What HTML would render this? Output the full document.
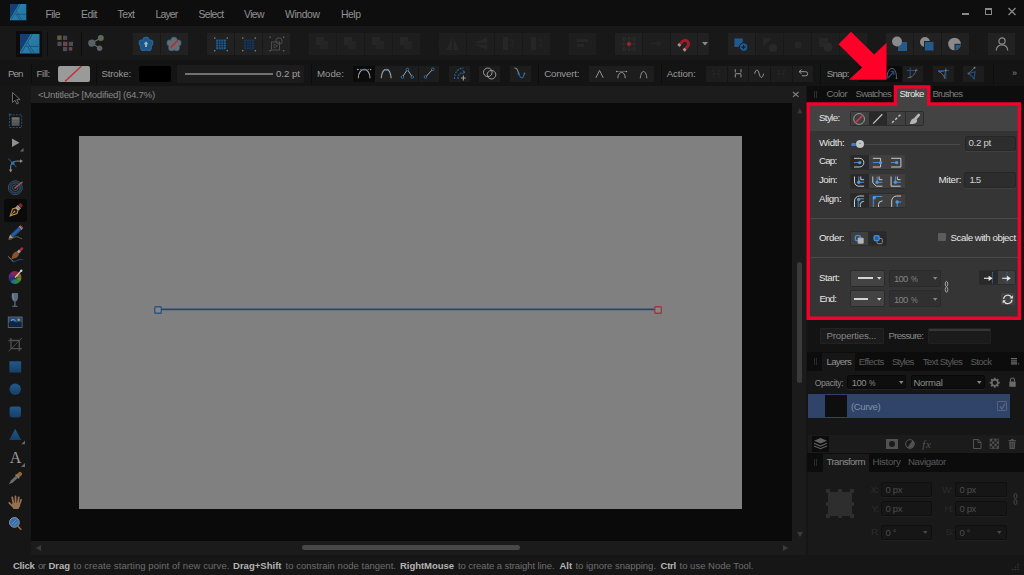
<!DOCTYPE html>
<html><head><meta charset="utf-8"><title>Affinity Designer - Stroke panel</title>
<style>
html,body{margin:0;padding:0;background:#161616;}
body{width:1024px;height:575px;position:relative;overflow:hidden;font-family:"Liberation Sans",sans-serif;}
body div,body svg,body span.t{position:absolute;display:block;}
span.t{white-space:pre;line-height:1;}
svg{overflow:visible}
</style></head><body>
<div style="left:0px;top:0px;width:1024px;height:26px;background:#0e0e0e;"></div>
<svg style="left:9.5px;top:4px;" width="16.3" height="16.3" viewBox="0 0 16 16"><defs><linearGradient id="lg1" x1="0" y1="0" x2="1" y2="1"><stop offset="0" stop-color="#2c87ae"/><stop offset="1" stop-color="#2273a0"/></linearGradient></defs><rect width="16" height="16" fill="url(#lg1)"/><path d="M0 0H8.800L0 14.800z" fill="#133f76"/><path d="M10.200 0L1.300 15.200M6.300 7l5.200 8.600M4.300 10.200H16M6.300 10.200l3.300 5.500" stroke="#1a5580" stroke-width=".8" fill="none"/></svg>
<span class="t" style="left:45.5px;top:10px;font-size:10.4px;letter-spacing:-0.565px;color:#929292;">File</span>
<span class="t" style="left:81px;top:10px;font-size:10.4px;letter-spacing:-0.480px;color:#929292;">Edit</span>
<span class="t" style="left:117.5px;top:10px;font-size:10.4px;letter-spacing:-0.518px;color:#929292;">Text</span>
<span class="t" style="left:155.5px;top:10px;font-size:10.4px;letter-spacing:-0.803px;color:#929292;">Layer</span>
<span class="t" style="left:198.5px;top:10px;font-size:10.4px;letter-spacing:-0.651px;color:#929292;">Select</span>
<span class="t" style="left:244px;top:10px;font-size:10.4px;letter-spacing:-0.589px;color:#929292;">View</span>
<span class="t" style="left:285px;top:10px;font-size:10.4px;letter-spacing:-0.415px;color:#929292;">Window</span>
<span class="t" style="left:341px;top:10px;font-size:10.4px;letter-spacing:-0.472px;color:#929292;">Help</span>
<div style="left:961.5px;top:12.5px;width:7.5px;height:2.5px;background:#8a8a8a;"></div>
<div style="left:984.5px;top:8px;width:7.5px;height:7px;background:transparent;border:1px solid #8a8a8a;border-top:2.5px solid #8a8a8a;box-sizing:border-box;"></div>
<svg style="left:1008px;top:8px;" width="8" height="7" viewBox="0 0 8 7"><path d="M0.5 0L7.5 7M7.5 0L0.5 7" stroke="#8a8a8a" stroke-width="1.3"/></svg>
<div style="left:0px;top:26px;width:1024px;height:35px;background:#181818;"></div>
<div style="left:16px;top:31px;width:26px;height:25.5px;background:#0b0b0b;border-radius:2px;"></div>
<svg style="left:20px;top:34px;" width="19.5" height="19.5" viewBox="0 0 16 16"><defs><linearGradient id="lg2" x1="0" y1="0" x2="1" y2="1"><stop offset="0" stop-color="#2c87ae"/><stop offset="1" stop-color="#2273a0"/></linearGradient></defs><rect width="16" height="16" fill="url(#lg2)"/><path d="M0 0H8.800L0 14.800z" fill="#133f76"/><path d="M10.200 0L1.300 15.200M6.300 7l5.200 8.600M4.300 10.200H16M6.300 10.200l3.300 5.500" stroke="#1a5580" stroke-width=".8" fill="none"/></svg>
<div style="left:47px;top:32px;width:1px;height:24px;background:#0c0c0c;"></div>
<div style="left:81px;top:32px;width:1px;height:24px;background:#0c0c0c;"></div>
<svg style="left:56px;top:35px;" width="18" height="18" viewBox="56 35 18 18"><rect x="57.2" y="35.5" width="4.4" height="4.4" fill="#6a5a3c"/><rect x="63" y="35.7" width="4.2" height="4.2" fill="#4c4c58"/><rect x="57.4" y="41.8" width="4.2" height="4.2" fill="#4c4c58"/><rect x="63" y="41.7" width="4.4" height="4.4" fill="#6c4646"/><rect x="68.8" y="41.8" width="4.2" height="4.2" fill="#4c4c58"/><rect x="63" y="47" width="4.2" height="4.2" fill="#4c4c58"/><rect x="68.8" y="47.1" width="3.5" height="3.5" fill="#6c4646"/></svg>
<svg style="left:86px;top:33px;" width="18" height="20" viewBox="86 33 18 20"><path d="M91.800 43.100L100.800 38.100M91.800 43.100L99.600 48.300" stroke="#6a7072" stroke-width="1.100"/><circle cx="91.800" cy="43.100" r="3.700" fill="#566265"/><circle cx="100.800" cy="38.100" r="3" fill="#5e6a58"/><circle cx="99.600" cy="48.300" r="2.700" fill="#606068"/></svg>
<div style="left:133px;top:33px;width:27px;height:21.5px;background:#212121;"></div>
<div style="left:161px;top:33px;width:27px;height:21.5px;background:#212121;"></div>
<svg style="left:138.3px;top:36px;" width="16" height="16" viewBox="0 0 16 16"><circle cx="8.00" cy="4.10" r="3.400" fill="#2a6ea6"/><circle cx="11.99" cy="7.00" r="3.400" fill="#2a6ea6"/><circle cx="10.47" cy="11.70" r="3.400" fill="#2a6ea6"/><circle cx="5.53" cy="11.70" r="3.400" fill="#2a6ea6"/><circle cx="4.01" cy="7.00" r="3.400" fill="#2a6ea6"/><circle cx="8.00" cy="4.10" r="2.700" fill="#1d5788"/><circle cx="11.99" cy="7.00" r="2.700" fill="#1d5788"/><circle cx="10.47" cy="11.70" r="2.700" fill="#1d5788"/><circle cx="5.53" cy="11.70" r="2.700" fill="#1d5788"/><circle cx="4.01" cy="7.00" r="2.700" fill="#1d5788"/><circle cx="8" cy="8.300" r="4.300" fill="#1d5788"/><path d="M8 5.200l2.300 3H8.900v2.800H7.100V8.200H5.700z" fill="#a8b4bc"/></svg>
<svg style="left:166.3px;top:36px;" width="16" height="16" viewBox="0 0 16 16"><circle cx="8.00" cy="4.10" r="3.400" fill="#235f92"/><circle cx="11.99" cy="7.00" r="3.400" fill="#235f92"/><circle cx="10.47" cy="11.70" r="3.400" fill="#235f92"/><circle cx="5.53" cy="11.70" r="3.400" fill="#235f92"/><circle cx="4.01" cy="7.00" r="3.400" fill="#235f92"/><circle cx="8.00" cy="4.10" r="2.700" fill="#6c6c6c"/><circle cx="11.99" cy="7.00" r="2.700" fill="#6c6c6c"/><circle cx="10.47" cy="11.70" r="2.700" fill="#6c6c6c"/><circle cx="5.53" cy="11.70" r="2.700" fill="#6c6c6c"/><circle cx="4.01" cy="7.00" r="2.700" fill="#6c6c6c"/><circle cx="8" cy="8.300" r="4.300" fill="#6c6c6c"/><path d="M4.300 12L11.700 4.600" stroke="#b02a34" stroke-width="1.400"/></svg>
<div style="left:207px;top:33px;width:27px;height:21.5px;background:#212121;"></div>
<div style="left:235px;top:33px;width:27px;height:21.5px;background:#212121;"></div>
<div style="left:263px;top:33px;width:27px;height:21.5px;background:#212121;"></div>
<svg style="left:212.5px;top:35.5px;" width="16" height="16" viewBox="0 0 16 16"><rect x="3.200" y="3.600" width="9.600" height="9.600" fill="#20639a" opacity="1"/><path d="M5.6 3.600v9.600M3.200 6.0h9.600" stroke="#16202a" stroke-width=".7"/><path d="M8.0 3.600v9.600M3.200 8.4h9.600" stroke="#16202a" stroke-width=".7"/><path d="M10.4 3.600v9.600M3.200 10.8h9.600" stroke="#16202a" stroke-width=".7"/><rect x="1.0" y="1.4000000000000001" width="1.400" height="1.400" fill="#7c7c7c"/><rect x="13.600000000000001" y="1.4000000000000001" width="1.400" height="1.400" fill="#7c7c7c"/><rect x="1.0" y="14.0" width="1.400" height="1.400" fill="#7c7c7c"/><rect x="13.600000000000001" y="14.0" width="1.400" height="1.400" fill="#7c7c7c"/></svg>
<svg style="left:240.5px;top:35.5px;" width="16" height="16" viewBox="0 0 16 16"><rect x="3.200" y="3.600" width="9.600" height="9.600" fill="#173c5e" opacity="1"/><path d="M5.6 3.600v9.600M3.200 6.0h9.600" stroke="#16202a" stroke-width=".7"/><path d="M8.0 3.600v9.600M3.200 8.4h9.600" stroke="#16202a" stroke-width=".7"/><path d="M10.4 3.600v9.600M3.200 10.8h9.600" stroke="#16202a" stroke-width=".7"/><rect x="1.0" y="1.4000000000000001" width="1.400" height="1.400" fill="#7c7c7c"/><rect x="13.600000000000001" y="1.4000000000000001" width="1.400" height="1.400" fill="#7c7c7c"/><rect x="1.0" y="14.0" width="1.400" height="1.400" fill="#7c7c7c"/><rect x="13.600000000000001" y="14.0" width="1.400" height="1.400" fill="#7c7c7c"/></svg>
<svg style="left:268.5px;top:35.5px;" width="16" height="16" viewBox="0 0 16 16"><rect x="2.500" y="6" width="8" height="8" fill="none" stroke="#4c4c4c"/><circle cx="10" cy="5" r="3.200" fill="none" stroke="#4c4c4c"/><path d="M5 8l3.500 2L5 12z" fill="none" stroke="#4c4c4c" stroke-width=".8"/><rect x=".5" y=".5" width="1.3" height="1.3" fill="#6a6a6a"/><rect x="14" y=".5" width="1.3" height="1.3" fill="#6a6a6a"/><rect x=".5" y="14" width="1.3" height="1.3" fill="#6a6a6a"/><rect x="14" y="14" width="1.3" height="1.3" fill="#6a6a6a"/></svg>
<div style="left:309px;top:33px;width:27px;height:21.5px;background:#1e1e1e;"></div>
<svg style="left:315px;top:36px;" width="15" height="15" viewBox="0 0 15 15"><rect x="1" y="1" width="8" height="8" fill="#262626"/><rect x="5" y="5" width="8" height="8" fill="#262626" opacity=".8"/></svg>
<div style="left:337px;top:33px;width:27px;height:21.5px;background:#1e1e1e;"></div>
<svg style="left:343px;top:36px;" width="15" height="15" viewBox="0 0 15 15"><rect x="1" y="1" width="8" height="8" fill="#262626"/><rect x="5" y="5" width="8" height="8" fill="#262626" opacity=".8"/></svg>
<div style="left:365px;top:33px;width:27px;height:21.5px;background:#1e1e1e;"></div>
<svg style="left:371px;top:36px;" width="15" height="15" viewBox="0 0 15 15"><rect x="1" y="1" width="8" height="8" fill="#262626"/><rect x="5" y="5" width="8" height="8" fill="#262626" opacity=".8"/></svg>
<div style="left:393px;top:33px;width:27px;height:21.5px;background:#1e1e1e;"></div>
<svg style="left:399px;top:36px;" width="15" height="15" viewBox="0 0 15 15"><rect x="1" y="1" width="8" height="8" fill="#262626"/><rect x="5" y="5" width="8" height="8" fill="#262626" opacity=".8"/></svg>
<div style="left:439px;top:33px;width:27px;height:21.5px;background:#1e1e1e;"></div>
<div style="left:467px;top:33px;width:27px;height:21.5px;background:#1e1e1e;"></div>
<div style="left:495px;top:33px;width:27px;height:21.5px;background:#1e1e1e;"></div>
<div style="left:523px;top:33px;width:27px;height:21.5px;background:#1e1e1e;"></div>
<svg style="left:445px;top:36px;" width="15" height="15" viewBox="0 0 15 15"><path d="M7 1v13H1zM8.500 1l5.500 13H8.500z" fill="#262626"/></svg>
<svg style="left:473px;top:36px;" width="15" height="15" viewBox="0 0 15 15"><path d="M1 7h13V1zM1 8.500l13 5.500V8.500z" fill="#262626"/></svg>
<svg style="left:501px;top:36px;" width="15" height="15" viewBox="0 0 15 15"><rect x="2" y="1" width="5" height="13" fill="#262626"/><path d="M9 4h3v6h-3" stroke="#262626" fill="none" stroke-width="1.200"/></svg>
<svg style="left:529px;top:36px;" width="15" height="15" viewBox="0 0 15 15"><rect x="2" y="1" width="5" height="13" fill="#262626"/><path d="M9 4h3v6h-3" stroke="#262626" fill="none" stroke-width="1.200"/></svg>
<div style="left:569px;top:33px;width:27px;height:21.5px;background:#1e1e1e;"></div>
<svg style="left:575px;top:36px;" width="15" height="15" viewBox="0 0 15 15"><rect x="2" y="3" width="11" height="3" fill="#262626"/><rect x="2" y="8" width="7" height="3" fill="#262626"/></svg>
<div style="left:615px;top:33px;width:27px;height:21.5px;background:#212121;"></div>
<div style="left:643px;top:33px;width:27px;height:21.5px;background:#1e1e1e;"></div>
<div style="left:671px;top:33px;width:26.3px;height:21.5px;background:#212121;"></div>
<div style="left:698.3px;top:33px;width:11.2px;height:21.5px;background:#212121;"></div>
<svg style="left:620.5px;top:35.5px;" width="16" height="16" viewBox="0 0 16 16"><path d="M3 1v14M1 3h14" stroke="#303030" stroke-width="1" stroke-dasharray="2 1"/><path d="M8 1v14M1 8h14" stroke="#303030" stroke-width="1" stroke-dasharray="2 1"/><path d="M13 1v14M1 13h14" stroke="#303030" stroke-width="1" stroke-dasharray="2 1"/><rect x="6.300" y="6.300" width="3.400" height="3.400" fill="#b0202a"/></svg>
<svg style="left:649px;top:36px;" width="15" height="15" viewBox="0 0 15 15"><path d="M2 7.500h9M8.500 5l3 2.500-3 2.500" stroke="#262626" stroke-width="1.300" fill="none"/></svg>
<svg style="left:676px;top:35px;" width="18" height="18" viewBox="0 0 18 18"><g transform="rotate(222 9 9) translate(1.5 1.5) scale(.84)"><path d="M3 3v6a6 6 0 0012 0V3h-3.500v6a2.500 2.500 0 01-5 0V3z" fill="#a01c28"/><rect x="3" y="2" width="3.500" height="3" fill="#9a9a9a"/><rect x="11.500" y="2" width="3.500" height="3" fill="#9a9a9a"/></g></svg>
<svg style="left:701.5px;top:42px;" width="6" height="4" viewBox="0 0 6 4"><path d="M0 0h6L3 3.500z" fill="#8a8a8a"/></svg>
<div style="left:728px;top:33px;width:27px;height:21.5px;background:#212121;"></div>
<div style="left:756px;top:33px;width:27px;height:21.5px;background:#1e1e1e;"></div>
<div style="left:784px;top:33px;width:27px;height:21.5px;background:#1e1e1e;"></div>
<div style="left:812px;top:33px;width:27px;height:21.5px;background:#1e1e1e;"></div>
<div style="left:840px;top:33px;width:27px;height:21.5px;background:#1e1e1e;"></div>
<svg style="left:734.3px;top:37.5px;" width="16" height="16" viewBox="0 0 16 16"><rect x="0.400" y="0.500" width="8.400" height="8.400" fill="#1f5a8e"/><circle cx="9.700" cy="9.100" r="4.300" fill="#1f5a8e" stroke="#1b1b1b" stroke-width="1"/><path d="M7.300 9.100h4.400M9.500 6.900v4.400" stroke="#10202e" stroke-width="1.100"/></svg>
<svg style="left:762px;top:36.5px;" width="16" height="16" viewBox="0 0 16 16"><path d="M1 1h9L1 10z" fill="#262626"/><circle cx="11" cy="11" r="4" fill="#292929"/></svg>
<svg style="left:790px;top:36.5px;" width="16" height="16" viewBox="0 0 16 16"><circle cx="8" cy="8" r="3.500" fill="#262626"/></svg>
<svg style="left:818px;top:36.5px;" width="16" height="16" viewBox="0 0 16 16"><path d="M1 1h9v9H1z" fill="#262626"/><circle cx="10" cy="10" r="4.500" fill="#292929"/></svg>
<div style="left:886px;top:33px;width:27px;height:21.5px;background:#212121;"></div>
<div style="left:914px;top:33px;width:27px;height:21.5px;background:#212121;"></div>
<div style="left:942px;top:33px;width:27px;height:21.5px;background:#212121;"></div>
<svg style="left:891px;top:36px;" width="17" height="17" viewBox="0 0 17 17"><rect x="7" y="6" width="9" height="9" fill="#235a8c"/><circle cx="6" cy="5.500" r="5" fill="#8a8a8a"/></svg>
<svg style="left:919px;top:36px;" width="17" height="17" viewBox="0 0 17 17"><circle cx="6" cy="6" r="5" fill="#8a8a8a"/><rect x="5.500" y="5.500" width="9.500" height="9.500" fill="#235a8c" stroke="#232323" stroke-width="1"/></svg>
<svg style="left:947px;top:36px;" width="17" height="17" viewBox="0 0 17 17"><defs><clipPath id="cpi"><circle cx="7.500" cy="8" r="6.300"/></clipPath></defs><circle cx="7.500" cy="8" r="6.300" fill="#8a8a8a"/><rect x="8" y="8.300" width="7" height="7" fill="#235a8c" stroke="#212121" stroke-width="1" clip-path="url(#cpi)"/></svg>
<div style="left:988px;top:33px;width:27px;height:21.5px;background:#212121;"></div>
<svg style="left:994.5px;top:36.5px;" width="14" height="14" viewBox="0 0 14 14"><circle cx="7" cy="4" r="3.100" fill="none" stroke="#8c8c8c" stroke-width="1.200"/><path d="M1.200 13.500c.5-4 2.800-5.600 5.800-5.600s5.300 1.600 5.800 5.600" fill="none" stroke="#8c8c8c" stroke-width="1.200"/></svg>
<div style="left:0px;top:60px;width:1024px;height:26px;background:#141414;"></div>
<span class="t" style="left:8px;top:69px;font-size:9.7px;letter-spacing:-0.920px;color:#9a9a9a;">Pen</span>
<div style="left:31px;top:64px;width:1px;height:20px;background:#0c0c0c;"></div>
<span class="t" style="left:36.5px;top:69px;font-size:9.7px;letter-spacing:-0.317px;color:#9a9a9a;">Fill:</span>
<div style="left:58px;top:66px;width:31.5px;height:15.5px;background:#9a9a9a;border-radius:2px;overflow:hidden;"><svg width="31.500" height="15.500" style="left:0;top:0"><path d="M7 15.500L23.500 0" stroke="#c42c3a" stroke-width="1.400"/></svg></div>
<div style="left:96px;top:64px;width:1px;height:20px;background:#0c0c0c;"></div>
<span class="t" style="left:101.5px;top:69px;font-size:9.7px;letter-spacing:-0.176px;color:#9a9a9a;">Stroke:</span>
<div style="left:139px;top:66px;width:31.5px;height:15.5px;background:#000;border-radius:2px;"></div>
<div style="left:177px;top:65px;width:126.5px;height:18px;background:#1c1c1c;border-radius:2px;"></div>
<div style="left:184.5px;top:73.3px;width:88.5px;height:1.5px;background:#727272;"></div>
<span class="t" style="left:276px;top:69px;font-size:9.7px;letter-spacing:-0.045px;color:#a0a0a0;">0.2 pt</span>
<div style="left:311px;top:64px;width:1px;height:20px;background:#0c0c0c;"></div>
<span class="t" style="left:317px;top:69px;font-size:9.7px;letter-spacing:0.008px;color:#9a9a9a;">Mode:</span>
<div style="left:353.3px;top:66px;width:21.5px;height:15.5px;background:#0b0b0b;"></div>
<div style="left:375.3px;top:66px;width:21.3px;height:15.5px;background:#1d1d1d;"></div>
<div style="left:397px;top:66px;width:21.3px;height:15.5px;background:#1d1d1d;"></div>
<div style="left:418.7px;top:66px;width:20.5px;height:15.5px;background:#1d1d1d;"></div>
<svg style="left:353px;top:65px;" width="88" height="17" viewBox="353 65 88 17"><path d="M358.300 78.200C358.300 66.500 370 66.500 370 78.200" fill="none" stroke="#a2a2a2" stroke-width="1.100"/><path d="M357.500 69.500h13.500" stroke="#8a8a8a" stroke-width=".7" stroke-dasharray="1.500 1"/><circle cx="364.150" cy="69.700" r="1.100" fill="#3577b4"/><circle cx="357.800" cy="69.500" r=".8" fill="#a2a2a2"/><circle cx="370.600" cy="69.500" r=".8" fill="#a2a2a2"/><path d="M381.200 78.200C382.500 66.400 390 66.400 391.200 78.200" fill="none" stroke="#a2a2a2" stroke-width="1.100"/><circle cx="386.200" cy="70" r="1.100" fill="#3577b4"/><path d="M402.500 77L407.400 69.500L412.300 77" fill="none" stroke="#a2a2a2" stroke-width="1"/><circle cx="402.5" cy="77" r="1.300" fill="#141414" stroke="#3577b4" stroke-width=".9"/><circle cx="407.4" cy="69.5" r="1.300" fill="#141414" stroke="#3577b4" stroke-width=".9"/><circle cx="412.3" cy="77" r="1.300" fill="#141414" stroke="#3577b4" stroke-width=".9"/><path d="M425.500 77L432.800 69.300" fill="none" stroke="#a2a2a2" stroke-width="1"/><circle cx="425.5" cy="77" r="1.300" fill="#141414" stroke="#3577b4" stroke-width=".9"/><circle cx="432.8" cy="69.3" r="1.300" fill="#141414" stroke="#3577b4" stroke-width=".9"/></svg>
<div style="left:449px;top:66px;width:21px;height:15.5px;background:#1d1d1d;"></div>
<div style="left:479px;top:66px;width:21px;height:15.5px;background:#1d1d1d;"></div>
<div style="left:509.5px;top:66px;width:21px;height:15.5px;background:#1d1d1d;"></div>
<svg style="left:449px;top:65px;" width="83" height="17" viewBox="449 65 83 17"><path d="M454.500 79C454.500 72.500 457.500 68.500 463.500 68" fill="none" stroke="#2a6aa6" stroke-width="1.100" stroke-dasharray="1.800 1.200"/><path d="M458 79c0-4 1.800-6.300 5.500-6.800" fill="none" stroke="#2a6aa6" stroke-width="1.100" stroke-dasharray="1.800 1.200"/><path d="M462.500 70.500l2.500 1.700-2.700 1.600" fill="none" stroke="#2a6aa6" stroke-width="1"/><path d="M461 78h4.800M463.400 75.600v4.800" stroke="#9a9a9a" stroke-width="1.100"/><circle cx="487.800" cy="72.300" r="4.300" fill="none" stroke="#9c9c9c" stroke-width="1"/><circle cx="491.500" cy="74.700" r="4.300" fill="none" stroke="#9c9c9c" stroke-width="1"/><path d="M514.500 68c3.500 0 3.500 3.500 4.200 5.700" fill="none" stroke="#8a8a8a" stroke-width="1.100"/><path d="M518.700 73.700c1 4 3.500 5.500 4.800 2.500l.8-2.200" fill="none" stroke="#2a6aa6" stroke-width="1.100"/><circle cx="518.700" cy="73.700" r="1.200" fill="#2a6aa6"/><circle cx="524.500" cy="73.500" r=".9" fill="#666"/></svg>
<div style="left:538px;top:64px;width:1px;height:20px;background:#0c0c0c;"></div>
<span class="t" style="left:544.2px;top:69px;font-size:9.7px;letter-spacing:-0.207px;color:#9a9a9a;">Convert:</span>
<div style="left:589px;top:66px;width:21.5px;height:15.5px;background:#1d1d1d;"></div>
<div style="left:611px;top:66px;width:21.5px;height:15.5px;background:#1d1d1d;"></div>
<div style="left:633px;top:66px;width:21px;height:15.5px;background:#1d1d1d;"></div>
<svg style="left:593.44px;top:68.26px;" width="13.12" height="11.48" viewBox="0 0 16 14"><path d="M3.500 12L8 3l4.500 9" fill="none" stroke="#a2a2a2" stroke-width="1.100"/></svg>
<svg style="left:615.44px;top:68.26px;" width="13.12" height="11.48" viewBox="0 0 16 14"><path d="M3.500 12.500C3.500 3 12.500 3 12.500 12.500" fill="none" stroke="#a2a2a2" stroke-width="1.100"/><path d="M2 4.200h12" stroke="#777" stroke-width=".8"/><circle cx="2" cy="4.200" r=".9" fill="#a2a2a2"/><circle cx="14" cy="4.200" r=".9" fill="#a2a2a2"/></svg>
<svg style="left:637.44px;top:68.26px;" width="13.12" height="11.48" viewBox="0 0 16 14"><path d="M4 12.500C5 1.500 11 1.500 12 12.500" fill="none" stroke="#a2a2a2" stroke-width="1.100"/></svg>
<div style="left:661px;top:64px;width:1px;height:20px;background:#0c0c0c;"></div>
<span class="t" style="left:666.7px;top:69px;font-size:9.7px;letter-spacing:-0.094px;color:#9a9a9a;">Action:</span>
<div style="left:706px;top:66px;width:20.5px;height:15.5px;background:#1d1d1d;"></div>
<div style="left:727.5px;top:66px;width:20.5px;height:15.5px;background:#1d1d1d;"></div>
<div style="left:749px;top:66px;width:21px;height:15.5px;background:#1d1d1d;"></div>
<div style="left:771px;top:66px;width:20.5px;height:15.5px;background:#1d1d1d;"></div>
<div style="left:792.5px;top:66px;width:20.5px;height:15.5px;background:#1d1d1d;"></div>
<svg style="left:710.35px;top:68.26px;" width="12.3" height="11.48" viewBox="0 0 15 14"><path d="M4 2v10M11 2v10M4 7h7" stroke="#2a2a2a" stroke-width="1.100" stroke-dasharray="3 1.500"/></svg>
<svg style="left:731.85px;top:68.26px;" width="12.3" height="11.48" viewBox="0 0 15 14"><path d="M4 1.500v11M11 1.500v11" stroke="#a2a2a2" stroke-width="1.100" stroke-dasharray="4 2"/><path d="M4 7h7" stroke="#a2a2a2" stroke-width="1.100"/></svg>
<svg style="left:753.35px;top:68.26px;" width="12.3" height="11.48" viewBox="0 0 15 14"><path d="M2 7c1.500-6 4-6 5.500 0s4 6 5.500 0" fill="none" stroke="#a2a2a2" stroke-width="1.100"/></svg>
<svg style="left:775.35px;top:68.26px;" width="12.3" height="11.48" viewBox="0 0 15 14"><path d="M4 2v10M11 2v10M4 7h7" stroke="#2a2a2a" stroke-width="1.100" stroke-dasharray="3 1.500"/></svg>
<svg style="left:796.85px;top:68.26px;" width="12.3" height="11.48" viewBox="0 0 15 14"><path d="M3 4.500h7.500a2.500 2.500 0 010 5H6" fill="none" stroke="#a2a2a2" stroke-width="1.100"/><path d="M5.500 2L2.500 4.500l3 2.500" fill="none" stroke="#a2a2a2" stroke-width="1.100"/></svg>
<div style="left:820px;top:64px;width:1px;height:20px;background:#0c0c0c;"></div>
<span class="t" style="left:826.7px;top:69px;font-size:9.7px;letter-spacing:-0.670px;color:#9a9a9a;">Snap:</span>
<div style="left:859px;top:66px;width:43px;height:15.5px;background:#0b0b0b;"></div>
<div style="left:902.5px;top:66px;width:20.5px;height:15.5px;background:#1d1d1d;"></div>
<div style="left:933px;top:66px;width:20.5px;height:15.5px;background:#1d1d1d;"></div>
<div style="left:963px;top:66px;width:21px;height:15.5px;background:#1d1d1d;"></div>
<svg style="left:884px;top:65px;" width="102" height="16" viewBox="884 65 102 16"><path d="M887 78.500c0-6 2-10 5-10s4.500 4 4.500 10" fill="none" stroke="#646464" stroke-width="1"/><path d="M888 78l5.500-6" stroke="#1f4f80" stroke-width="1.200"/><path d="M890.500 71.500h3.300v3.500" fill="none" stroke="#1f4f80" stroke-width="1.100"/><circle cx="896.500" cy="78.300" r=".9" fill="#555"/><path d="M910.200 67.700v10.600M906.700 70.500h11.300" stroke="#1f4f80" stroke-width="1.100"/><path d="M907.500 77.800c5 0 8-4 8.800-9" fill="none" stroke="#646464" stroke-width="1"/><circle cx="910.200" cy="77.300" r=".9" fill="#666"/><circle cx="915.800" cy="70.500" r=".9" fill="#666"/><path d="M938.500 71.500c3 .2 5 0 7.500-1.500-1 3-1.500 5.500-1.300 8.500-.8-3.200-3-5.800-6.200-7z" fill="none" stroke="#646464" stroke-width="1"/><path d="M945.800 68v11M938 70.500h11" stroke="#1f4f80" stroke-width="1.100"/><circle cx="945.800" cy="70.500" r=".9" fill="#777"/><path d="M968.800 73.500l6.400-1.800-1.200 6.800z" fill="none" stroke="#1f4f80" stroke-width="1.100"/><path d="M968.800 73.500l5.700-5.800" stroke="#646464" stroke-width="1"/><circle cx="968.500" cy="73.500" r=".9" fill="#666"/><circle cx="974.600" cy="67.800" r="1" fill="#777"/><circle cx="974" cy="78.500" r=".9" fill="#1f4f80"/></svg>
<div style="left:992.5px;top:64px;width:1px;height:20px;background:#0c0c0c;"></div>
<span class="t" style="left:1012px;top:69px;font-size:9px;letter-spacing:-0.506px;color:#8a8a8a;">»</span>
<div style="left:31px;top:86px;width:775px;height:17.2px;background:#1c1c1c;"></div>
<span class="t" style="left:38px;top:90px;font-size:9.7px;letter-spacing:-0.298px;color:#868686;">&lt;Untitled&gt; [Modified] (64.7%)</span>
<svg style="left:793px;top:92px;" width="5.6" height="4.9" viewBox="0 0 5.6 4.9"><path d="M0 0L5.600 4.900M5.600 0L0 4.900" stroke="#848484" stroke-width="1.100"/></svg>
<div style="left:31px;top:103.2px;width:761px;height:437.8px;background:#0a0a0a;"></div>
<div style="left:78.5px;top:135.5px;width:663.5px;height:373.5px;background:#808080;"></div>
<svg style="left:150px;top:300px;" width="520" height="20" viewBox="150 300 520 20"><path d="M161.500 309.450H654.500" stroke="#28466c" stroke-width="1.700"/><rect x="154.800" y="306.700" width="6.500" height="6.500" rx=".8" fill="#878787" stroke="#2c538a" stroke-width="1.400"/><rect x="654.800" y="306.700" width="6.500" height="6.500" rx=".8" fill="#878787" stroke="#a4363e" stroke-width="1.400"/></svg>
<div style="left:792px;top:103.2px;width:14.3px;height:451.8px;background:#1b1b1b;"></div>
<div style="left:31px;top:540.8px;width:761px;height:14.2px;background:#1b1b1b;"></div>
<div style="left:797px;top:261.5px;width:5px;height:121px;background:#3a3a3a;border-radius:2.500px;"></div>
<div style="left:302px;top:545px;width:217.5px;height:5px;background:#484848;border-radius:2.500px;"></div>
<svg style="left:796.7px;top:108.2px;" width="5.6" height="5.4" viewBox="0 0 5.6 5.4"><path d="M2.800 0L5.600 5.400H0z" fill="#363636"/></svg>
<svg style="left:796.5px;top:531.5px;" width="6" height="5" viewBox="0 0 6 5"><path d="M0 0h6L3 5z" fill="#3c3c3c"/></svg>
<svg style="left:35.5px;top:544.5px;" width="5" height="6" viewBox="0 0 5 6"><path d="M5 0v6L0 3z" fill="#3c3c3c"/></svg>
<svg style="left:782.5px;top:544.5px;" width="5" height="6" viewBox="0 0 5 6"><path d="M0 0v6l5-3z" fill="#3c3c3c"/></svg>
<div style="left:0px;top:555px;width:1024px;height:20px;background:#161616;"></div>
<span class="t" style="left:13px;top:561px;font-size:9.5px;letter-spacing:-0.241px;color:#b4b4b4;font-weight:bold;">Click</span>
<span class="t" style="left:38px;top:561px;font-size:9.5px;letter-spacing:-0.474px;color:#6e6e6e;">or</span>
<span class="t" style="left:48.5px;top:561px;font-size:9.5px;letter-spacing:-0.036px;color:#b4b4b4;font-weight:bold;">Drag</span>
<span class="t" style="left:73.5px;top:561px;font-size:9.5px;letter-spacing:0.075px;color:#6e6e6e;">to create starting point of new curve.</span>
<span class="t" style="left:233px;top:561px;font-size:9.5px;letter-spacing:0.020px;color:#b4b4b4;font-weight:bold;">Drag+Shift</span>
<span class="t" style="left:285.5px;top:561px;font-size:9.5px;letter-spacing:0.025px;color:#6e6e6e;">to constrain node tangent.</span>
<span class="t" style="left:400px;top:561px;font-size:9.5px;letter-spacing:-0.036px;color:#b4b4b4;font-weight:bold;">RightMouse</span>
<span class="t" style="left:458px;top:561px;font-size:9.5px;letter-spacing:-0.087px;color:#6e6e6e;">to create a straight line.</span>
<span class="t" style="left:559.5px;top:561px;font-size:9.5px;letter-spacing:-0.055px;color:#b4b4b4;font-weight:bold;">Alt</span>
<span class="t" style="left:575.5px;top:561px;font-size:9.5px;letter-spacing:-0.016px;color:#6e6e6e;">to ignore snapping.</span>
<span class="t" style="left:660.5px;top:561px;font-size:9.5px;letter-spacing:-0.215px;color:#b4b4b4;font-weight:bold;">Ctrl</span>
<span class="t" style="left:679.5px;top:561px;font-size:9.5px;letter-spacing:0.014px;color:#6e6e6e;">to use Node Tool.</span>
<svg style="left:1012px;top:563px;" width="8" height="8" viewBox="0 0 8 8"><path d="M6 1v1M6 3.500v1M3.500 3.500v1M6 6v1M3.500 6v1M1 6v1" stroke="#3a3a3a" stroke-width="1.500"/></svg>
<div style="left:0px;top:86px;width:31px;height:469px;background:#161616;"></div>
<svg style="left:7.5px;top:89.6px;" width="16" height="16" viewBox="0 0 16 16"><path d="M4.500 2.500v10l2.600-2.300 1.700 3.800 1.700-.8-1.700-3.600h3.400z" fill="#0e0e0e" stroke="#6a6a6a" stroke-width="1"/></svg>
<svg style="left:7.5px;top:113.0px;" width="16" height="16" viewBox="0 0 16 16"><defs><linearGradient id="abg" x1="0" y1="0" x2="0" y2="1"><stop offset="0" stop-color="#787878"/><stop offset="1" stop-color="#505050"/></linearGradient></defs><rect x="1.500" y="1.800" width="12.200" height="12.700" fill="none" stroke="#1a5484" stroke-width="1" stroke-dasharray="2 1.200"/><rect x="3.700" y="4.300" width="7.800" height="8.500" fill="url(#abg)"/><path d="M3.700 7.200h7.800M3.700 10h7.800" stroke="#404040" stroke-width=".6"/><path d="M2 0v2.500M0.500 1.500h3" stroke="#1a5484" stroke-width=".8"/></svg>
<svg style="left:6.5px;top:134.5px;" width="18" height="18" viewBox="0 0 18 18"><path d="M5 3.500l7.500 4.300-7.500 4.300z" fill="#909090"/><path d="M16.500 13v3.500h-3.500z" fill="#6a6a6a"/></svg>
<svg style="left:0px;top:152px;" width="32" height="70" viewBox="0 152 32 70"><path d="M10.700 170.500v-3.500c0-3.500 2.500-5.900 6-5.900h4" fill="none" stroke="#8a8a8a" stroke-width="1"/><path d="M20 159.300l3 1.800-3 1.800zM8.900 169.500l1.800 3 1.800-3z" fill="#8a8a8a"/><path d="M8.500 158.700L16.400 167.200" stroke="#1a4f80" stroke-width="1.100"/><rect x="11.400" y="161.700" width="3" height="3" fill="#2b78b8"/></svg>
<svg style="left:0px;top:152px;" width="32" height="70" viewBox="0 152 32 70"><circle cx="15.300" cy="187.700" r="6.900" fill="none" stroke="#5c5c5c" stroke-width=".8"/><circle cx="15.300" cy="187.700" r="5" fill="none" stroke="#19446e" stroke-width="2"/><circle cx="15.300" cy="187.700" r="2.800" fill="none" stroke="#5c5c5c" stroke-width=".9"/><path d="M15.300 187.700L22 182.300" stroke="#a8565e" stroke-width="1.100"/><path d="M22.800 181.600l-.8 2.500-1.700-1.900z" fill="#a8565e"/><circle cx="15.300" cy="187.700" r="1" fill="#a8565e"/></svg>
<div style="left:4px;top:199px;width:22.5px;height:22.5px;background:#0a0a0a;border-radius:3px;"></div>
<svg style="left:7.0px;top:201.5px;" width="17" height="17" viewBox="0 0 17 17"><g transform="rotate(45 8.500 8.500)"><path d="M8.500 16l-3.200-6.500 1.600-3h3.200l1.600 3z" fill="#1a1a1a" stroke="#c08a4a" stroke-width="1.100"/><path d="M8.500 15v-4.500" stroke="#c08a4a" stroke-width=".8"/><circle cx="8.500" cy="10" r=".9" fill="#c08a4a"/><rect x="6.300" y="3" width="4.400" height="3.300" fill="#b8b8b8"/><path d="M6.300 4.100h4.400M6.300 5.200h4.400" stroke="#444" stroke-width=".5"/><rect x="6.600" y="-.5" width="3.800" height="3.500" rx=".8" fill="#7a2626"/></g></svg>
<svg style="left:0px;top:220px;" width="32" height="70" viewBox="0 220 32 70"><g transform="translate(15.200 232.800) rotate(47.500)"><rect x="-2.100" y="-9.300" width="4.200" height="1.800" rx=".6" fill="#b04848"/><rect x="-2.100" y="-7.700" width="4.200" height="1.100" fill="#a8a8a8"/><rect x="-2.100" y="-6.600" width="4.200" height="11.600" fill="#1f4f8a"/><rect x="-.7" y="-6.600" width="1.400" height="11.600" fill="#2a63a8"/><path d="M-2.100 5h4.200L0 9.200z" fill="#b89a68"/><path d="M-.7 7.800h1.400L0 9.200z" fill="#333"/></g><path d="M8.500 239.300c3.500 1 5-2.800 8-2.600 2.500.2 3.500 1.500 5.500 2.200" fill="none" stroke="#6a6a6a" stroke-width=".9"/></svg>
<svg style="left:0px;top:220px;" width="32" height="70" viewBox="0 220 32 70"><g transform="translate(16.500 254) rotate(45)"><rect x="-1.200" y="-9" width="2.400" height="4.500" rx="1" fill="#b02c3c"/><rect x="-1.400" y="-4.800" width="2.800" height="3" fill="#a0a0a0"/><path d="M-1.800 -1.800h3.600c1.200 1.800 1.200 4 0 6-.6 1-1.200 2-1.800 3.300-.6-1.300-1.200-2.300-1.800-3.300-1.200-2-1.200-4.200 0-6z" fill="#8a5226"/></g><path d="M8.200 256.500l5.300 5.300" stroke="#8a8a8a" stroke-width="1"/><path d="M12.500 261.200c3.500 1.300 5-1.800 7.500-1.800 1.500 0 2 .5 3 .3" fill="none" stroke="#1f4f80" stroke-width="1"/></svg>
<svg style="left:7.2px;top:269px;" width="16" height="16" viewBox="0 0 16 16"><path d="M8 8.500L8.00 2.00A6.500 6.500 0 0 1 12.60 3.90z" fill="#8a2626"/><path d="M8 8.500L12.60 3.90A6.500 6.500 0 0 1 14.50 8.50z" fill="#8a6a26"/><path d="M8 8.500L14.50 8.50A6.500 6.500 0 0 1 12.60 13.10z" fill="#5c8a26"/><path d="M8 8.500L12.60 13.10A6.500 6.500 0 0 1 8.00 15.00z" fill="#268a40"/><path d="M8 8.500L8.00 15.00A6.500 6.500 0 0 1 3.40 13.10z" fill="#267088"/><path d="M8 8.500L3.40 13.10A6.500 6.500 0 0 1 1.50 8.50z" fill="#26308a"/><path d="M8 8.500L1.50 8.50A6.500 6.500 0 0 1 3.40 3.90z" fill="#64268a"/><path d="M8 8.500L3.40 3.90A6.500 6.500 0 0 1 8.00 2.00z" fill="#8a2664"/><circle cx="8" cy="8.500" r="2" fill="#333"/><path d="M8 8.500L14 2" stroke="#c8c8c8" stroke-width="1.200"/><circle cx="14.200" cy="1.800" r="1.200" fill="#d0d0d0"/></svg>
<svg style="left:0px;top:288px;" width="32" height="70" viewBox="0 288 32 70"><path d="M12 293h5.800c.6 3.500.4 6-.8 7.500-.8 1-1.500 1.300-2.100 1.300s-1.300-.3-2.100-1.300c-1.200-1.500-1.400-4-.8-7.500z" fill="#5c6a80"/><path d="M13.200 294c-.3 2.500-.1 4.500.8 5.800" stroke="#8a98ac" stroke-width=".8" fill="none"/><path d="M14.900 301.500v4.500M12.300 306.300h5.200" stroke="#6a7890" stroke-width="1.100"/></svg>
<svg style="left:0px;top:288px;" width="32" height="70" viewBox="0 288 32 70"><rect x="8.300" y="317" width="13.800" height="10.500" fill="#1a4a80" stroke="#666" stroke-width=".9"/><path d="M8.800 322.500c2-1.800 4-1.500 6-.3s4.500-1 6.800 0v4.800H8.800z" fill="#0e2440"/><path d="M11 320.500c1.500-1.300 3.500-1 4.500.2" stroke="#a8c0d8" stroke-width=".9" fill="none"/><circle cx="18.700" cy="319.800" r="1.300" fill="#c89030"/></svg>
<svg style="left:0px;top:288px;" width="32" height="70" viewBox="0 288 32 70"><path d="M11 338v10.700h10.900M8.500 340.500h10.800v10.800" fill="none" stroke="#505050" stroke-width="1.300"/><path d="M8.500 351.300L22 338" stroke="#505050" stroke-width=".9"/></svg>
<svg style="left:0px;top:355px;" width="32" height="92" viewBox="0 355 32 92"><defs><linearGradient id="shg" x1="0" y1="0" x2="0" y2="1"><stop offset="0" stop-color="#20598c"/><stop offset="1" stop-color="#173f66"/></linearGradient></defs><rect x="9.400" y="361.300" width="11.800" height="11.300" fill="url(#shg)"/><circle cx="15.200" cy="389.200" r="5.700" fill="url(#shg)"/><rect x="9.600" y="406.500" width="11.400" height="10.900" rx="2.300" fill="url(#shg)"/><path d="M15.200 428.700L21.200 440H9.200z" fill="url(#shg)"/><path d="M25 440.500v3.800h-3.800z" fill="#666"/></svg>
<span class="t" style="left:9.8px;top:450px;font-size:16px;letter-spacing:0.000px;color:#9a9a9a;font-family:'Liberation Serif',serif;">A</span>
<svg style="left:21.3px;top:463px;" width="4" height="4" viewBox="0 0 4 4"><path d="M4 0v4H0z" fill="#6a6a6a"/></svg>
<svg style="left:0px;top:444px;" width="32" height="92" viewBox="0 444 32 92"><g transform="translate(14.800 478.800) rotate(47)"><rect x="-2" y="-9" width="4" height="5" rx="1.500" fill="#96662e"/><rect x="-2.600" y="-4.300" width="5.200" height="1.500" fill="#8a8a8a"/><path d="M-1.400 -2.800h2.800v6.500L0 8.500l-1.400-4.800z" fill="#6c6c6c"/></g></svg>
<svg style="left:0px;top:444px;" width="32" height="92" viewBox="0 444 32 92"><path d="M11.800 504c0-1.500 7.900-2.500 8.400 0 .4 2-1 3.500-1.800 5h-5c-1.200-1.500-1.600-3-1.600-5z" fill="#987050"/><path d="M19.800 503.500l1.300-3.700M17.900 502.500l.9-5.200M15.500 502.300v-5.900M13.200 502.600l-1-5.200M12.300 506l-3-3.200" stroke="#987050" stroke-width="1.800" stroke-linecap="round"/></svg>
<svg style="left:0px;top:444px;" width="32" height="92" viewBox="0 444 32 92"><path d="M18 526.200l3.300 3.600" stroke="#a0703a" stroke-width="1.600"/><circle cx="14.400" cy="522.400" r="4.900" fill="#3a6ea6" stroke="#8696a6" stroke-width="1"/><path d="M11.500 524.500l5-5.200M13.500 525.800l4-4" stroke="#6a9ad0" stroke-width="1" fill="none" opacity=".7"/></svg>
<div style="left:806.5px;top:86px;width:217.5px;height:469px;background:#151515;"></div>
<div style="left:806.5px;top:86px;width:217.5px;height:17.5px;background:#0d0d0d;"></div>
<div style="left:813.5px;top:91px;width:1px;height:6.5px;background:#2e2e2e;"></div>
<div style="left:816px;top:91px;width:1px;height:6.5px;background:#2e2e2e;"></div>
<span class="t" style="left:826.4px;top:89px;font-size:9.7px;letter-spacing:-0.436px;color:#7a7a7a;">Color</span>
<span class="t" style="left:855.5px;top:89px;font-size:9.7px;letter-spacing:-0.819px;color:#7a7a7a;">Swatches</span>
<span class="t" style="left:932.5px;top:89px;font-size:9.7px;letter-spacing:-0.841px;color:#7a7a7a;">Brushes</span>
<div style="left:808px;top:104px;width:212px;height:214.5px;background:#353535;"></div>
<div style="left:808px;top:104px;width:212px;height:27.3px;background:#434343;"></div>
<div style="left:895.5px;top:87px;width:33.5px;height:18px;background:#434343;"></div>
<span class="t" style="left:899.4px;top:89px;font-size:9.7px;letter-spacing:-0.623px;color:#e6e6e6;">Stroke</span>
<svg style="left:0px;top:0px;" width="1024" height="575" viewBox="0 0 1024 575"><path d="M808.200 104H895.400V86.900H928.800V104H1019.400V318.300H808.200z" fill="none" stroke="#f5002b" stroke-width="3.400" stroke-linejoin="miter"/></svg>
<svg style="left:0px;top:0px;" width="1024" height="575" viewBox="0 0 1024 575"><path d="M851 31.700L874.200 54.500L886.500 42.700V79.800H849L862 67.600L838.500 44.300z" fill="#ff0029"/></svg>
<span class="t" style="left:819px;top:113px;font-size:9.7px;letter-spacing:-0.627px;color:#e6e6e6;">Style:</span>
<div style="left:850.0px;top:111.1px;width:73.8px;height:15.0px;background:#2c2c2c;border-radius:2px;"></div>
<div style="left:850.5px;top:111.6px;width:18.2px;height:13.5px;background:#3f3f3f;"></div>
<div style="left:869.2px;top:111.6px;width:17.7px;height:13.5px;background:#292929;"></div>
<div style="left:887.4px;top:111.6px;width:17.7px;height:13.5px;background:#3f3f3f;"></div>
<div style="left:905.6px;top:111.6px;width:17.7px;height:13.5px;background:#3f3f3f;"></div>
<svg style="left:850px;top:110.4px;" width="74" height="17" viewBox="850 110 74 17"><circle cx="859.100" cy="119" r="5.400" fill="none" stroke="#a4a4a4" stroke-width=".9"/><path d="M855.800 122.300L862.400 115.700" stroke="#dc3c44" stroke-width="1.400"/><path d="M873.100 123.600L882.300 114.300" stroke="#c4c4c4" stroke-width="1.300"/><path d="M892 122.800L900.400 114.700" stroke="#bcbcbc" stroke-width="1.500" stroke-dasharray="2.600 1.900"/><path d="M909.800 124c.4-2.600 1.400-4.800 3.600-5.600 1.300-.4 2.600 0 3.300 1 .8 1.200.4 2.500-.6 3.300-1.700 1.300-4 1.500-6.300 1.300z" fill="#b4b4b4"/><path d="M915.500 118.500L918.800 115" stroke="#b4b4b4" stroke-width="2.600" stroke-linecap="round"/></svg>
<span class="t" style="left:819px;top:138px;font-size:9.7px;letter-spacing:-0.332px;color:#e6e6e6;">Width:</span>
<div style="left:851px;top:143.8px;width:109px;height:1.3px;background:#4a4a4a;border-radius:1px;"></div>
<div style="left:851px;top:143px;width:6px;height:3px;background:#3d7cc4;border-radius:1.500px;"></div>
<div style="left:856px;top:140.3px;width:8.2px;height:8.2px;background:#c4c4c4;border-radius:50%;box-shadow:0 0 1px #222;"></div>
<div style="left:859.3px;top:142.8px;width:1.6px;height:1.6px;background:#5a8fd0;border-radius:50%;"></div>
<div style="left:964.5px;top:135.7px;width:51.2px;height:15px;background:#2d2d2d;border-radius:2px;border:1px solid #262626;box-sizing:border-box;box-shadow:0 1px 0 #404040;"></div>
<span class="t" style="left:968.5px;top:138px;font-size:9.7px;letter-spacing:-0.295px;color:#d0d0d0;">0.2 pt</span>
<span class="t" style="left:819px;top:156px;font-size:9.7px;letter-spacing:-0.797px;color:#e6e6e6;">Cap:</span>
<div style="left:850.0px;top:154.5px;width:55.300000000000004px;height:15.1px;background:#2c2c2c;border-radius:2px;"></div>
<div style="left:850.5px;top:155px;width:18.1px;height:13.6px;background:#292929;"></div>
<div style="left:869.1px;top:155px;width:17.6px;height:13.6px;background:#3f3f3f;"></div>
<div style="left:887.2px;top:155px;width:17.6px;height:13.6px;background:#3f3f3f;"></div>
<span class="t" style="left:819px;top:175px;font-size:9.7px;letter-spacing:-0.498px;color:#e6e6e6;">Join:</span>
<div style="left:850.0px;top:173.9px;width:55.300000000000004px;height:14.9px;background:#2c2c2c;border-radius:2px;"></div>
<div style="left:850.5px;top:174.4px;width:18.1px;height:13.4px;background:#292929;"></div>
<div style="left:869.1px;top:174.4px;width:17.6px;height:13.4px;background:#3f3f3f;"></div>
<div style="left:887.2px;top:174.4px;width:17.6px;height:13.4px;background:#3f3f3f;"></div>
<span class="t" style="left:819px;top:194px;font-size:9.7px;letter-spacing:-0.328px;color:#e6e6e6;">Align:</span>
<div style="left:850.0px;top:193.2px;width:55.300000000000004px;height:14.9px;background:#2c2c2c;border-radius:2px;"></div>
<div style="left:850.5px;top:193.7px;width:18.1px;height:13.4px;background:#292929;"></div>
<div style="left:869.1px;top:193.7px;width:17.6px;height:13.4px;background:#3f3f3f;"></div>
<div style="left:887.2px;top:193.7px;width:17.6px;height:13.4px;background:#3f3f3f;"></div>
<svg style="left:850px;top:155px;" width="56" height="14" viewBox="850 155 56 14"><path d="M854 158.300h5.500a4.350 4.350 0 010 8.700H854" fill="none" stroke="#c8c8c8" stroke-width="1"/><path d="M854 162.600h5.500" stroke="#4a98e2" stroke-width=".9"/><circle cx="859.7" cy="162.6" r="1.7" fill="#4a98e2"/><path d="M872.800 158.300h7.800v8.700h-7.800" fill="none" stroke="#c8c8c8" stroke-width="1"/><path d="M872.800 162.600h7.500" stroke="#4a98e2" stroke-width=".9"/><circle cx="880.5" cy="162.6" r="1.7" fill="#4a98e2"/><path d="M891.100 158.300h9.800v8.700h-9.800" fill="none" stroke="#c8c8c8" stroke-width="1"/><path d="M891.100 162.600h5.500" stroke="#4a98e2" stroke-width=".9"/><circle cx="896.6" cy="162.6" r="1.7" fill="#4a98e2"/></svg>
<svg style="left:850px;top:174px;" width="56" height="14" viewBox="850 174 56 14"><path d="M854.5 176.500v5.400a4.300 4.300 0 004.300 4.300h5.300" fill="none" stroke="#c8c8c8" stroke-width="1"/><path d="M860.8 176.500v3.200h3.300" fill="none" stroke="#c8c8c8" stroke-width="1"/><path d="M858.8 176.500v5.800h5.300" fill="none" stroke="#4a98e2" stroke-width=".9"/><circle cx="858.8" cy="182.3" r="1.7" fill="#4a98e2"/><path d="M872.8 176.500v6.200l3.500 3.500h6.100" fill="none" stroke="#c8c8c8" stroke-width="1"/><path d="M879.0999999999999 176.500v3.200h3.300" fill="none" stroke="#c8c8c8" stroke-width="1"/><path d="M877.0999999999999 176.500v5.800h5.300" fill="none" stroke="#4a98e2" stroke-width=".9"/><circle cx="877.0999999999999" cy="182.3" r="1.7" fill="#4a98e2"/><path d="M891.1 176.500v9.700h9.600" fill="none" stroke="#c8c8c8" stroke-width="1"/><path d="M897.4 176.500v3.200h3.300" fill="none" stroke="#c8c8c8" stroke-width="1"/><path d="M895.4 176.500v5.800h5.300" fill="none" stroke="#4a98e2" stroke-width=".9"/><circle cx="895.4" cy="182.3" r="1.7" fill="#4a98e2"/></svg>
<svg style="left:850px;top:193px;" width="56" height="14.5" viewBox="850 193 56 14.5"><path d="M854.500 207v-6a5 5 0 015-5h4.600" fill="none" stroke="#c8c8c8" stroke-width="1"/><path d="M860.300 207v-2.500a3 3 0 013-3h.8" fill="none" stroke="#c8c8c8" stroke-width="1"/><path d="M858.200 207v-8.200h5.900" fill="none" stroke="#4a98e2" stroke-width=".9"/><circle cx="858.7" cy="199.4" r="1.7" fill="#4a98e2"/><path d="M873.300 207v-10.500h9" fill="none" stroke="#4a98e2" stroke-width=".9"/><path d="M878.500 207v-2.500a3.500 3.500 0 013.500-3.500h.5" fill="none" stroke="#c8c8c8" stroke-width="1"/><circle cx="874.3" cy="197.7" r="1.7" fill="#4a98e2"/><path d="M891.700 207v-6a5 5 0 015-5h4.400" fill="none" stroke="#c8c8c8" stroke-width="1"/><path d="M897.200 207v-5h4" fill="none" stroke="#4a98e2" stroke-width=".9"/><circle cx="897.2" cy="202" r="1.7" fill="#4a98e2"/></svg>
<span class="t" style="left:938.4px;top:175px;font-size:9.7px;letter-spacing:-0.242px;color:#e6e6e6;">Miter:</span>
<div style="left:964.3px;top:172.3px;width:51.4px;height:15.4px;background:#2d2d2d;border-radius:2px;border:1px solid #262626;box-sizing:border-box;box-shadow:0 1px 0 #404040;"></div>
<span class="t" style="left:969.4px;top:175px;font-size:9.7px;letter-spacing:-0.828px;color:#d0d0d0;">1.5</span>
<div style="left:811px;top:218.3px;width:207px;height:1px;background:#4a4a4a;"></div>
<div style="left:811px;top:257.2px;width:207px;height:1px;background:#4a4a4a;"></div>
<span class="t" style="left:819px;top:233px;font-size:9.7px;letter-spacing:-0.415px;color:#e6e6e6;">Order:</span>
<div style="left:850.0px;top:231.2px;width:36.8px;height:15.1px;background:#2c2c2c;border-radius:2px;"></div>
<div style="left:850.5px;top:231.7px;width:17.9px;height:13.6px;background:#3f3f3f;"></div>
<div style="left:868.9px;top:231.7px;width:17.4px;height:13.6px;background:#292929;"></div>
<svg style="left:850px;top:231px;" width="38" height="15" viewBox="850 231 38 15"><rect x="857.700" y="237.700" width="6" height="6" rx="1" fill="#b4b4b4"/><rect x="855.400" y="235.600" width="5" height="5" rx="1.300" fill="#3f3f3f" stroke="#3f8ed8" stroke-width="1.400"/><rect x="857.700" y="237.700" width="3.400" height="3.700" fill="#b4b4b4"/><rect x="877" y="238.400" width="5.300" height="5.300" rx="1.200" fill="none" stroke="#8a8a8a" stroke-width="1"/><rect x="874.100" y="235.600" width="5" height="5" rx="1.300" fill="#2a5f9a" stroke="#3f8ed8" stroke-width="1.400"/></svg>
<div style="left:938.4px;top:233.4px;width:8px;height:8px;background:#5c5c5c;border-radius:1px;"></div>
<span class="t" style="left:950.6px;top:233px;font-size:9.7px;letter-spacing:-0.446px;color:#e6e6e6;">Scale with object</span>
<span class="t" style="left:819px;top:273px;font-size:9.7px;letter-spacing:-0.447px;color:#e6e6e6;">Start:</span>
<span class="t" style="left:819.5px;top:294px;font-size:9.7px;letter-spacing:-0.864px;color:#e6e6e6;">End:</span>
<div style="left:850px;top:269.6px;width:35.3px;height:17px;background:#434343;border-radius:2px;border:1px solid #2b2b2b;box-sizing:border-box;"></div>
<div style="left:858px;top:277.3px;width:14.5px;height:1.8px;background:#d4d4d4;"></div>
<svg style="left:877.3px;top:276.90000000000003px;" width="4.4" height="2.7" viewBox="0 0 4.4 2.7"><path d="M0 0h4.400L2.200 2.700z" fill="#d8d8d8"/></svg>
<div style="left:889.3px;top:269.6px;width:51.3px;height:17px;background:#303030;border-radius:2px;border:1px solid #2a2a2a;box-sizing:border-box;"></div>
<span class="t" style="left:894.1px;top:274px;font-size:9.5px;letter-spacing:-0.784px;color:#828282;">100</span>
<span class="t" style="left:910.9px;top:274px;font-size:9.5px;letter-spacing:0.000px;color:#828282;transform:scaleX(.8);transform-origin:0 0;">%</span>
<svg style="left:932.8px;top:276.90000000000003px;" width="4.4" height="2.7" viewBox="0 0 4.4 2.7"><path d="M0 0h4.400L2.200 2.700z" fill="#8a8a8a"/></svg>
<div style="left:850px;top:290.3px;width:35.3px;height:17px;background:#434343;border-radius:2px;border:1px solid #2b2b2b;box-sizing:border-box;"></div>
<div style="left:853.5px;top:298.0px;width:14.5px;height:1.8px;background:#d4d4d4;"></div>
<svg style="left:877.3px;top:297.6px;" width="4.4" height="2.7" viewBox="0 0 4.4 2.7"><path d="M0 0h4.400L2.200 2.700z" fill="#d8d8d8"/></svg>
<div style="left:889.3px;top:290.3px;width:51.3px;height:17px;background:#303030;border-radius:2px;border:1px solid #2a2a2a;box-sizing:border-box;"></div>
<span class="t" style="left:894.1px;top:295px;font-size:9.5px;letter-spacing:-0.784px;color:#828282;">100</span>
<span class="t" style="left:910.9px;top:295px;font-size:9.5px;letter-spacing:0.000px;color:#828282;transform:scaleX(.8);transform-origin:0 0;">%</span>
<svg style="left:932.8px;top:297.6px;" width="4.4" height="2.7" viewBox="0 0 4.4 2.7"><path d="M0 0h4.400L2.200 2.700z" fill="#8a8a8a"/></svg>
<svg style="left:944.2px;top:281.3px;" width="5" height="12" viewBox="0 0 5 12"><ellipse cx="2.500" cy="3" rx="1.250" ry="2.600" fill="none" stroke="#b0b0b0" stroke-width=".9"/><ellipse cx="2.500" cy="8.600" rx="1.250" ry="2.600" fill="none" stroke="#b0b0b0" stroke-width=".9"/></svg>
<div style="left:978.6px;top:270.3px;width:37px;height:15px;background:#2c2c2c;border-radius:2px;"></div>
<div style="left:979.1px;top:270.7px;width:18.5px;height:13.8px;background:#292929;"></div>
<div style="left:998px;top:270.7px;width:17px;height:13.8px;background:#3f3f3f;"></div>
<svg style="left:978px;top:270px;" width="38" height="15" viewBox="978 270 38 15"><path d="M984 278.300h5.500" stroke="#e0e0e0" stroke-width="1.200"/><path d="M988.600 275.700l4 2.600-4 2.600z" fill="#e8e8e8"/><path d="M992.500 272v11.500" stroke="#3a6e9e" stroke-width=".9" stroke-dasharray="1.500 .6"/><path d="M1007 272v11.500" stroke="#3a6e9e" stroke-width=".9" stroke-dasharray="1.500 .6"/><path d="M1002.200 278.300h5.500" stroke="#e0e0e0" stroke-width="1.200"/><path d="M1006.900 275.700l4 2.600-4 2.600z" fill="#e8e8e8"/></svg>
<div style="left:1001px;top:293px;width:14px;height:12.3px;background:#414141;border-radius:1px;"></div>
<svg style="left:1000px;top:292px;" width="16" height="15" viewBox="1000 292 16 15"><path d="M1011.61 297.63A4.2 4.2 0 0 0 1003.62 299.03" fill="none" stroke="#e4e4e4" stroke-width="1.200"/><path d="M1003.99 301.17A4.2 4.2 0 0 0 1011.98 299.77" fill="none" stroke="#e4e4e4" stroke-width="1.200"/><path d="M1012.900 295.300v3.200h-3.200z" fill="#e4e4e4"/><path d="M1002.700 303.500v-3.200h3.200z" fill="#e4e4e4"/></svg>
<div style="left:808px;top:320px;width:216px;height:32px;background:#131313;"></div>
<div style="left:820px;top:328px;width:63.5px;height:16.2px;background:#1b1b1b;border:1px solid #222;box-sizing:border-box;border-radius:1px;"></div>
<span class="t" style="left:826.6px;top:331px;font-size:9.7px;letter-spacing:-0.223px;color:#868686;">Properties...</span>
<span class="t" style="left:888.6px;top:331px;font-size:9.7px;letter-spacing:-0.768px;color:#868686;">Pressure:</span>
<div style="left:927.6px;top:328px;width:63.4px;height:16.2px;background:#1b1b1b;border:1px solid #202020;box-sizing:border-box;border-radius:1px;"></div>
<div style="left:929px;top:329px;width:60.5px;height:1.5px;background:#363636;"></div>
<div style="left:806.5px;top:352px;width:217.5px;height:18.8px;background:#0c0c0c;"></div>
<div style="left:813.5px;top:358px;width:1px;height:6.5px;background:#2a2a2a;"></div>
<div style="left:816px;top:358px;width:1px;height:6.5px;background:#2a2a2a;"></div>
<div style="left:822.3px;top:353px;width:32.7px;height:17.8px;background:#161616;"></div>
<span class="t" style="left:826.6px;top:357px;font-size:9.7px;letter-spacing:-0.786px;color:#929292;">Layers</span>
<span class="t" style="left:858.8px;top:357px;font-size:9.7px;letter-spacing:-0.653px;color:#5c5c5c;">Effects</span>
<span class="t" style="left:891.9px;top:357px;font-size:9.7px;letter-spacing:-0.786px;color:#5c5c5c;">Styles</span>
<span class="t" style="left:922.7px;top:357px;font-size:9.7px;letter-spacing:-0.673px;color:#5c5c5c;">Text Styles</span>
<span class="t" style="left:970.4px;top:357px;font-size:9.7px;letter-spacing:-0.652px;color:#5c5c5c;">Stock</span>
<svg style="left:1010.5px;top:358px;" width="8" height="7" viewBox="0 0 8 7"><path d="M0 .5h6M0 2.300h6M0 4.100h6M0 5.900h6" stroke="#6a6a6a" stroke-width="1.100"/><path d="M6.500 5.500h2l-1 1.300z" fill="#6a6a6a"/></svg>
<div style="left:808px;top:370.8px;width:216px;height:64.5px;background:#161616;"></div>
<span class="t" style="left:814.7px;top:379px;font-size:8.5px;letter-spacing:-0.335px;color:#8a8a8a;">Opacity:</span>
<div style="left:846.6px;top:375px;width:59.4px;height:14.3px;background:#0e0e0e;border:1px solid #090909;box-sizing:border-box;border-radius:2px;box-shadow:0 1px 0 #242424;"></div>
<span class="t" style="left:851.7px;top:378px;font-size:9.5px;letter-spacing:-0.517px;color:#8c8c8c;">100</span>
<span class="t" style="left:868.8px;top:378px;font-size:9.5px;letter-spacing:0.000px;color:#8c8c8c;transform:scaleX(.77);transform-origin:0 0;">%</span>
<svg style="left:898.8px;top:381px;" width="4.5" height="3" viewBox="0 0 4.5 3"><path d="M0 0h4.500L2.250 3z" fill="#8a8a8a"/></svg>
<div style="left:910.5px;top:375px;width:74.8px;height:14.3px;background:#0e0e0e;border:1px solid #090909;box-sizing:border-box;border-radius:2px;box-shadow:0 1px 0 #242424;"></div>
<span class="t" style="left:913.5px;top:378px;font-size:9.5px;letter-spacing:-0.269px;color:#8c8c8c;">Normal</span>
<svg style="left:976.8px;top:381px;" width="4.5" height="3" viewBox="0 0 4.5 3"><path d="M0 0h4.500L2.250 3z" fill="#8a8a8a"/></svg>
<svg style="left:989.8px;top:377.7px;" width="9.5" height="9.5" viewBox="0 0 9.5 9.5"><rect x="3.800" y="-.2" width="1.900" height="2.600" fill="#6a6a6a" transform="rotate(0 4.750 4.750)"/><rect x="3.800" y="-.2" width="1.900" height="2.600" fill="#6a6a6a" transform="rotate(45 4.750 4.750)"/><rect x="3.800" y="-.2" width="1.900" height="2.600" fill="#6a6a6a" transform="rotate(90 4.750 4.750)"/><rect x="3.800" y="-.2" width="1.900" height="2.600" fill="#6a6a6a" transform="rotate(135 4.750 4.750)"/><rect x="3.800" y="-.2" width="1.900" height="2.600" fill="#6a6a6a" transform="rotate(180 4.750 4.750)"/><rect x="3.800" y="-.2" width="1.900" height="2.600" fill="#6a6a6a" transform="rotate(225 4.750 4.750)"/><rect x="3.800" y="-.2" width="1.900" height="2.600" fill="#6a6a6a" transform="rotate(270 4.750 4.750)"/><rect x="3.800" y="-.2" width="1.900" height="2.600" fill="#6a6a6a" transform="rotate(315 4.750 4.750)"/><circle cx="4.750" cy="4.750" r="3" fill="none" stroke="#6a6a6a" stroke-width="1.500"/></svg>
<svg style="left:1008.5px;top:377px;" width="7" height="10" viewBox="0 0 7 10"><rect x=".3" y="4.500" width="6.400" height="5.300" fill="#6a6a6a"/><path d="M1.500 4.500V3a2 2 0 014 0v1.500" fill="none" stroke="#6a6a6a" stroke-width="1.100"/></svg>
<div style="left:808px;top:394px;width:202px;height:24px;background:#2f4468;"></div>
<div style="left:825px;top:395.2px;width:22px;height:21.5px;background:#0e0e0e;"></div>
<span class="t" style="left:850.9px;top:402px;font-size:9.5px;letter-spacing:-0.310px;color:#8592a6;">(Curve)</span>
<div style="left:997px;top:401.3px;width:9.7px;height:9.7px;background:transparent;border:1px solid #55617a;box-sizing:border-box;border-radius:1px;"></div>
<svg style="left:998.5px;top:402.5px;" width="7" height="7" viewBox="0 0 7 7"><path d="M1 3.500l2 2.500 3-5.500" fill="none" stroke="#5a6680" stroke-width="1.300"/></svg>
<div style="left:808px;top:435.3px;width:216px;height:17.7px;background:#1b1b1b;"></div>
<div style="left:812px;top:436px;width:17px;height:15.5px;background:#0c0c0c;"></div>
<svg style="left:814px;top:438px;" width="13" height="12" viewBox="0 0 13 12"><path d="M6.500 0L13 2.800 6.500 5.600 0 2.800z" fill="#606060"/><path d="M0 5.300L6.500 8.100 13 5.300M0 7.900L6.500 10.700 13 7.900" fill="none" stroke="#606060" stroke-width="1.100"/></svg>
<svg style="left:886px;top:439px;" width="12" height="10" viewBox="0 0 12 10"><rect width="12" height="10" fill="#525252"/><circle cx="6" cy="5" r="3" fill="#1b1b1b"/></svg>
<svg style="left:905px;top:439px;" width="10" height="10" viewBox="0 0 10 10"><circle cx="5" cy="5" r="4.400" fill="none" stroke="#525252" stroke-width="1"/><path d="M7.500 1.300A4.500 4.500 0 012.500 8.700z" fill="#525252"/></svg>
<span class="t" style="left:922.3px;top:439px;font-size:11px;letter-spacing:0.722px;color:#525252;font-family:'Liberation Serif',serif;font-style:italic;">fx</span>
<svg style="left:973px;top:439px;" width="8.5" height="10" viewBox="0 0 8.5 10"><path d="M.5 .5h4.800l2.700 2.700v6.300H.5z" fill="none" stroke="#525252" stroke-width="1"/><path d="M5 .5v3h3" fill="none" stroke="#525252" stroke-width="1"/></svg>
<svg style="left:990px;top:439px;" width="9" height="10" viewBox="0 0 9 10"><rect x="0.0" y="0.0" width="2.200" height="2.400" fill="#525252"/><rect x="0.0" y="4.8" width="2.200" height="2.400" fill="#525252"/><rect x="2.2" y="2.4" width="2.200" height="2.400" fill="#525252"/><rect x="2.2" y="7.199999999999999" width="2.200" height="2.400" fill="#525252"/><rect x="4.4" y="0.0" width="2.200" height="2.400" fill="#525252"/><rect x="4.4" y="4.8" width="2.200" height="2.400" fill="#525252"/><rect x="6.6000000000000005" y="2.4" width="2.200" height="2.400" fill="#525252"/><rect x="6.6000000000000005" y="7.199999999999999" width="2.200" height="2.400" fill="#525252"/><rect x="0" y="0" width="8.800" height="9.600" fill="none" stroke="#525252" stroke-width=".6"/></svg>
<svg style="left:1008.3px;top:437.6px;" width="8.4" height="11.5" viewBox="0 0 8 11"><path d="M.5 2.500h7" stroke="#525252" stroke-width="1.200"/><path d="M2.800 1.500h2.400" stroke="#525252" stroke-width="1.200"/><path d="M1 3.500h6l-.5 7H1.500z" fill="#525252"/><path d="M3 4.500v5M5 4.500v5" stroke="#1b1b1b" stroke-width=".6"/></svg>
<div style="left:806.5px;top:453px;width:217.5px;height:18.5px;background:#0c0c0c;"></div>
<div style="left:813.5px;top:459px;width:1px;height:6.5px;background:#2a2a2a;"></div>
<div style="left:816px;top:459px;width:1px;height:6.5px;background:#2a2a2a;"></div>
<div style="left:822.5px;top:454px;width:46.5px;height:17.5px;background:#191919;"></div>
<span class="t" style="left:826.5px;top:457px;font-size:9.7px;letter-spacing:-0.593px;color:#8c8c8c;">Transform</span>
<span class="t" style="left:872.6px;top:457px;font-size:9.7px;letter-spacing:-0.326px;color:#5a5a5a;">History</span>
<span class="t" style="left:908px;top:457px;font-size:9.7px;letter-spacing:-0.391px;color:#5a5a5a;">Navigator</span>
<div style="left:808px;top:471.5px;width:216px;height:83.5px;background:#191919;"></div>
<div style="left:828px;top:491.7px;width:24px;height:24px;background:#2e2e2e;"></div>
<div style="left:825.7px;top:489.4px;width:4.1px;height:4.1px;background:#2e2e2e;"></div>
<div style="left:825.7px;top:501.7px;width:4.1px;height:4.1px;background:#2e2e2e;"></div>
<div style="left:825.7px;top:513.9px;width:4.1px;height:4.1px;background:#2e2e2e;"></div>
<div style="left:838px;top:489.4px;width:4.1px;height:4.1px;background:#2e2e2e;"></div>
<div style="left:838px;top:501.7px;width:4.1px;height:4.1px;background:#2e2e2e;"></div>
<div style="left:838px;top:513.9px;width:4.1px;height:4.1px;background:#2e2e2e;"></div>
<div style="left:850.2px;top:489.4px;width:4.1px;height:4.1px;background:#2e2e2e;"></div>
<div style="left:850.2px;top:501.7px;width:4.1px;height:4.1px;background:#2e2e2e;"></div>
<div style="left:850.2px;top:513.9px;width:4.1px;height:4.1px;background:#2e2e2e;"></div>
<div style="left:881.3px;top:481.7px;width:51.2px;height:15.2px;background:#161616;border:1px solid #0f0f0f;box-sizing:border-box;border-radius:2px;box-shadow:0 1px 0 #202020;"></div>
<span class="t" style="left:885.5999999999999px;top:485px;font-size:9.5px;letter-spacing:-0.364px;color:#4c4c4c;">0 px</span>
<div style="left:955.2px;top:481.7px;width:51.5px;height:15.2px;background:#161616;border:1px solid #0f0f0f;box-sizing:border-box;border-radius:2px;box-shadow:0 1px 0 #202020;"></div>
<span class="t" style="left:959.5px;top:485px;font-size:9.5px;letter-spacing:-0.364px;color:#4c4c4c;">0 px</span>
<div style="left:881.3px;top:501.2px;width:51.2px;height:15.2px;background:#161616;border:1px solid #0f0f0f;box-sizing:border-box;border-radius:2px;box-shadow:0 1px 0 #202020;"></div>
<span class="t" style="left:885.5999999999999px;top:504px;font-size:9.5px;letter-spacing:-0.364px;color:#4c4c4c;">0 px</span>
<div style="left:955.2px;top:501.2px;width:51.5px;height:15.2px;background:#161616;border:1px solid #0f0f0f;box-sizing:border-box;border-radius:2px;box-shadow:0 1px 0 #202020;"></div>
<span class="t" style="left:959.5px;top:504px;font-size:9.5px;letter-spacing:-0.364px;color:#4c4c4c;">0 px</span>
<div style="left:881.3px;top:525px;width:51.2px;height:15.2px;background:#161616;border:1px solid #0f0f0f;box-sizing:border-box;border-radius:2px;box-shadow:0 1px 0 #202020;"></div>
<span class="t" style="left:885.5999999999999px;top:528px;font-size:9.5px;letter-spacing:-0.407px;color:#4c4c4c;">0 °</span>
<svg style="left:923.0px;top:531.3px;" width="4.5" height="3" viewBox="0 0 4.5 3"><path d="M0 0h4.500L2.250 3z" fill="#4a4a4a"/></svg>
<div style="left:955.2px;top:525px;width:51.5px;height:15.2px;background:#161616;border:1px solid #0f0f0f;box-sizing:border-box;border-radius:2px;box-shadow:0 1px 0 #202020;"></div>
<span class="t" style="left:959.5px;top:528px;font-size:9.5px;letter-spacing:-0.407px;color:#4c4c4c;">0 °</span>
<svg style="left:997.2px;top:531.3px;" width="4.5" height="3" viewBox="0 0 4.5 3"><path d="M0 0h4.500L2.250 3z" fill="#4a4a4a"/></svg>
<span class="t" style="left:870.5px;top:485px;font-size:9.7px;letter-spacing:-1.082px;color:#2c2c2c;">X:</span>
<span class="t" style="left:871.5px;top:504px;font-size:9.7px;letter-spacing:-1.065px;color:#2c2c2c;">Y:</span>
<span class="t" style="left:871px;top:527px;font-size:9.7px;letter-spacing:-1.600px;color:#2c2c2c;">R:</span>
<span class="t" style="left:942px;top:485px;font-size:9.7px;letter-spacing:-0.837px;color:#2c2c2c;">W:</span>
<span class="t" style="left:944.5px;top:504px;font-size:9.7px;letter-spacing:-1.100px;color:#2c2c2c;">H:</span>
<span class="t" style="left:945.5px;top:527px;font-size:9.7px;letter-spacing:-1.332px;color:#2c2c2c;">S:</span>
<svg style="left:1012.5px;top:493.3px;" width="5" height="12" viewBox="0 0 5 12"><ellipse cx="2.500" cy="3" rx="1.500" ry="2.600" fill="none" stroke="#4a4a4a" stroke-width=".9"/><ellipse cx="2.500" cy="9" rx="1.500" ry="2.600" fill="none" stroke="#4a4a4a" stroke-width=".9"/></svg>
</body></html>
